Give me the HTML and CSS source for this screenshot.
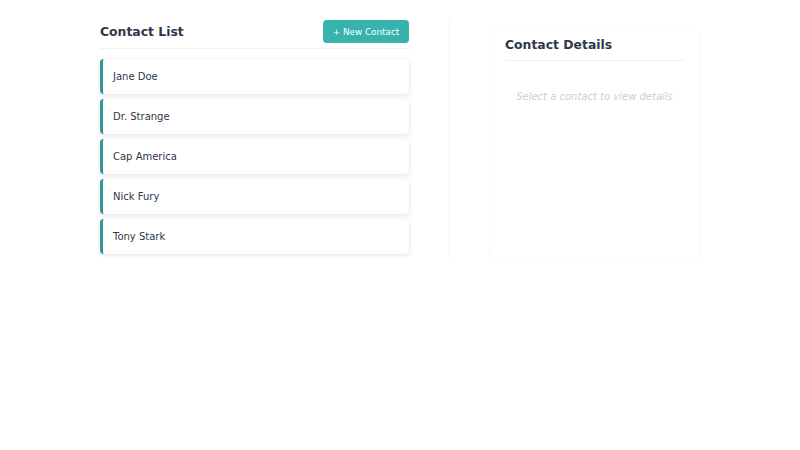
FILE: index.html
```html
<!DOCTYPE html>
<html>
<head>
<meta charset="utf-8">
<link rel="stylesheet" href="styles.css">
</head>
<body>
<div class="app">
  <section class="list-panel">
    <header class="list-header">
      <h2 class="title">Contact List</h2>
      <button class="btn-new">+ New Contact</button>
    </header>
    <ul class="contacts">
      <li class="contact">Jane Doe</li>
      <li class="contact">Dr. Strange</li>
      <li class="contact">Cap America</li>
      <li class="contact">Nick Fury</li>
      <li class="contact">Tony Stark</li>
    </ul>
  </section>
  <section class="detail-panel">
    <div class="detail-card">
      <h2 class="detail-title">Contact Details</h2>
      <p class="placeholder">Select a contact to view details</p>
    </div>
  </section>
</div>
</body>
</html>
```
FILE: styles.css
```css
* { box-sizing: border-box; }
body {
  margin: 0;
  background: #fff;
  font-family: "DejaVu Sans", sans-serif;
  color: #2d3748;
}
.app {
  width: 600px;
  margin: 20px auto 0;
  display: flex;
}
.list-panel {
  width: 350px;
  padding-right: 40px;
  border-right: 1px solid #f3f4f6;
}
.list-header {
  display: flex;
  justify-content: space-between;
  align-items: center;
  padding-bottom: 5px;
  border-bottom: 1px solid #f1f2f4;
}
.title {
  margin: 0;
  font-size: 12.4px;
  font-weight: bold;
  color: #2d3748;
}
.btn-new {
  background: #38b2ac;
  color: #fff;
  border: none;
  border-radius: 4px;
  height: 23px;
  width: 86px;
  padding: 0;
  font-family: inherit;
  font-size: 8.8px;
}
.contacts {
  list-style: none;
  margin: 10px 0 0;
  padding: 0;
  display: flex;
  flex-direction: column;
  gap: 5px;
}
.contact {
  height: 35px;
  display: flex;
  align-items: center;
  padding-left: 10px;
  padding-bottom: 1px;
  border-left: 3px solid #319795;
  border-radius: 4px;
  background: #fff;
  box-shadow: 0 1px 4px rgba(0,0,0,0.12);
  font-size: 10px;
  color: #2d3748;
}
.detail-panel {
  padding-left: 39px;
  flex: 1;
}
.detail-card {
  margin-top: 10px;
  height: 228px;
  padding: 0 15px;
  border-radius: 6px;
  box-shadow: 0 1px 3px rgba(0,0,0,0.03);
  border: 1px solid #fcfcfc;
}
.detail-title {
  margin: 0;
  padding: 6px 0 8px;
  font-size: 12.4px;
  font-weight: bold;
  border-bottom: 1px solid #f1f2f4;
}
.placeholder {
  margin: 30px 0 0;
  text-align: center;
  font-style: italic;
  font-size: 10px;
  color: #c6cfdb;
}
```
